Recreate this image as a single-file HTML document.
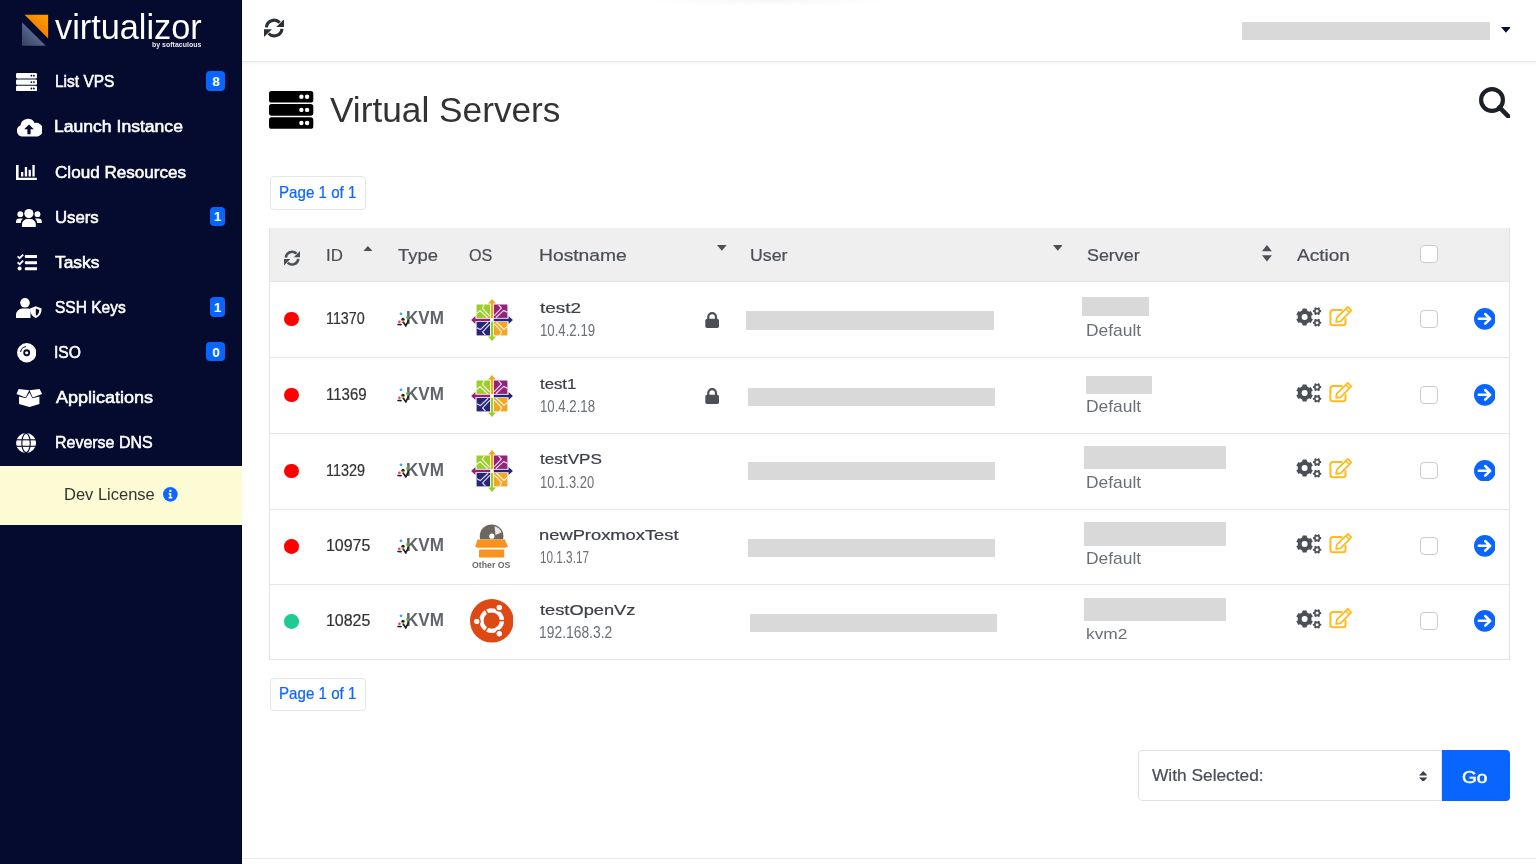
<!DOCTYPE html>
<html><head><meta charset="utf-8"><title>Virtual Servers</title>
<style>
html,body{margin:0;padding:0;}
body{width:1536px;height:864px;overflow:hidden;position:relative;background:#fff;font-family:"Liberation Sans",sans-serif;}
.a{position:absolute;display:block;}
.t{position:absolute;white-space:nowrap;transform-origin:0 0;}
</style></head><body>
<div class="a" style="left:0px;top:0px;width:242px;height:864px;background:#040b2e"></div>
<div class="a" style="left:241px;top:0px;width:1px;height:864px;background:#000628"></div>
<div class="a" style="left:242px;top:0px;width:1294px;height:61px;background:#fff"></div>
<div class="a" style="left:242px;top:61px;width:1294px;height:1px;background:#e4e6ea"></div>
<div class="a" style="left:242px;top:62px;width:1294px;height:4px;background:linear-gradient(#f6f6f7,#fff)"></div>
<div class="a" style="left:242px;top:858px;width:1294px;height:1px;background:#e9eaec"></div>
<div class="a" style="left:0px;top:466px;width:242px;height:59px;background:#fdfbd3"></div>
<div class="a" style="left:640px;top:0px;width:260px;height:6px;background:radial-gradient(ellipse at 50% 0%,rgba(0,0,0,0.035),rgba(0,0,0,0) 70%)"></div>
<svg class="a" style="left:20px;top:12px;width:30px;height:36px;" viewBox="20 12 30 36" preserveAspectRatio="none"><defs><linearGradient id="og" x1="1" y1="0" x2="0.3" y2="1"><stop offset="0" stop-color="#ffa000"/><stop offset="1" stop-color="#f07000"/></linearGradient>
<linearGradient id="bg" x1="0" y1="1" x2="0.7" y2="0.3"><stop offset="0" stop-color="#37425c"/><stop offset="1" stop-color="#5d73a0"/></linearGradient></defs>
<polygon points="24.6,14.8 48.1,14.8 48.1,38.5" fill="url(#og)"/>
<polygon points="22,22.3 22,45.7 45.8,45.7" fill="url(#bg)"/></svg>
<div class="t" style="left:54.83px;top:10px;font-size:34.6px;line-height:34.6px;color:#fff;transform:scaleX(0.9917);">virtualizor</div>
<div class="t" style="left:151.55px;top:41px;font-size:7.6px;line-height:7.6px;color:#e6e8ee;font-weight:bold;transform:scaleX(0.9201);">by softaculous</div>
<div class="t" style="left:54.56px;top:74px;font-size:16.6px;line-height:16.6px;color:#fff;-webkit-text-stroke:0.22px #fff;transform:scaleX(0.9337);-webkit-text-stroke:0.55px #fff;">List VPS</div>
<div class="t" style="left:54.39px;top:119px;font-size:16.6px;line-height:16.6px;color:#fff;-webkit-text-stroke:0.22px #fff;transform:scaleX(1.0587);-webkit-text-stroke:0.55px #fff;">Launch Instance</div>
<div class="t" style="left:54.95px;top:165px;font-size:16.6px;line-height:16.6px;color:#fff;-webkit-text-stroke:0.22px #fff;transform:scaleX(1.0301);-webkit-text-stroke:0.55px #fff;">Cloud Resources</div>
<div class="t" style="left:54.54px;top:210px;font-size:16.6px;line-height:16.6px;color:#fff;-webkit-text-stroke:0.22px #fff;transform:scaleX(1.0096);-webkit-text-stroke:0.55px #fff;">Users</div>
<div class="t" style="left:55.45px;top:255px;font-size:16.6px;line-height:16.6px;color:#fff;-webkit-text-stroke:0.22px #fff;transform:scaleX(1.0482);-webkit-text-stroke:0.55px #fff;">Tasks</div>
<div class="t" style="left:55.10px;top:300px;font-size:16.6px;line-height:16.6px;color:#fff;-webkit-text-stroke:0.22px #fff;transform:scaleX(0.9356);-webkit-text-stroke:0.55px #fff;">SSH Keys</div>
<div class="t" style="left:54.39px;top:345px;font-size:16.6px;line-height:16.6px;color:#fff;-webkit-text-stroke:0.22px #fff;transform:scaleX(0.9426);-webkit-text-stroke:0.55px #fff;">ISO</div>
<div class="t" style="left:55.71px;top:390px;font-size:16.6px;line-height:16.6px;color:#fff;-webkit-text-stroke:0.22px #fff;transform:scaleX(1.0855);-webkit-text-stroke:0.55px #fff;">Applications</div>
<div class="t" style="left:54.52px;top:435px;font-size:16.6px;line-height:16.6px;color:#fff;-webkit-text-stroke:0.22px #fff;transform:scaleX(0.9622);-webkit-text-stroke:0.55px #fff;">Reverse DNS</div>
<svg class="a" style="left:16px;top:72.8px;width:21.1px;height:18.200000000000003px;" viewBox="0 0 21 18.2" preserveAspectRatio="none"><rect x="0" y="0" width="21" height="5.4" rx="1.3" fill="#fff"/><circle cx="15.3" cy="2.7" r="0.9" fill="#040b2e"/><circle cx="17.8" cy="2.7" r="0.9" fill="#040b2e"/><rect x="0" y="6.4" width="21" height="5.4" rx="1.3" fill="#fff"/><circle cx="15.3" cy="9.100000000000001" r="0.9" fill="#040b2e"/><circle cx="17.8" cy="9.100000000000001" r="0.9" fill="#040b2e"/><rect x="0" y="12.8" width="21" height="5.4" rx="1.3" fill="#fff"/><circle cx="15.3" cy="15.5" r="0.9" fill="#040b2e"/><circle cx="17.8" cy="15.5" r="0.9" fill="#040b2e"/></svg>
<svg class="a" style="left:16px;top:118.4px;width:26px;height:18.599999999999994px;" viewBox="0 0 26 18.6" preserveAspectRatio="none"><path d="M6,18.6 A6,6 0 0 1 4.5,7.2 A7.5,7.5 0 0 1 18.6,5 A5.8,5.8 0 0 1 21.5,18.6 Z" fill="#fff"/><path d="M13,6.5 L8.2,11.3 H11.4 V16.2 H14.6 V11.3 H17.8 Z" fill="#040b2e"/></svg>
<svg class="a" style="left:16.2px;top:164.7px;width:20.8px;height:15.5px;" viewBox="0 0 20.8 15.5" preserveAspectRatio="none"><rect x="0" y="0" width="2.6" height="15.5" fill="#fff"/><rect x="0" y="12.8" width="20.8" height="2.7" rx="0.5" fill="#fff"/><rect x="5" y="7" width="2.3" height="4.5" fill="#fff"/><rect x="8.8" y="2" width="2.3" height="9.5" fill="#fff"/><rect x="12.6" y="4.8" width="2.3" height="6.7" fill="#fff"/><rect x="16.4" y="0" width="2.3" height="11.5" fill="#fff"/></svg>
<svg class="a" style="left:16.2px;top:209.2px;width:25.8px;height:18.200000000000017px;" viewBox="0 0 25.8 18.2" preserveAspectRatio="none"><circle cx="12.9" cy="4.6" r="4.6" fill="#fff"/><path d="M6,18.2 V15 A5.5,5.5 0 0 1 11.5,10 H14.3 A5.5,5.5 0 0 1 19.8,15 V18.2 Z" fill="#fff"/><circle cx="4.3" cy="5.2" r="2.9" fill="#fff"/><circle cx="21.5" cy="5.2" r="2.9" fill="#fff"/><path d="M0,14 V13 A3.5,3.5 0 0 1 3.5,9.5 H6.8 A6.5,6.5 0 0 0 4.8,14 Z" fill="#fff"/><path d="M25.8,14 V13 A3.5,3.5 0 0 0 22.3,9.5 H19 A6.5,6.5 0 0 1 21,14 Z" fill="#fff"/></svg>
<svg class="a" style="left:16.6px;top:254.3px;width:20.4px;height:16.69999999999999px;" viewBox="0 0 20.4 16.7" preserveAspectRatio="none"><path d="M0.6,2.4 L2.6,4.2 L6.2,0.6" stroke="#fff" stroke-width="1.8" fill="none"/><path d="M0.6,8.4 L2.6,10.2 L6.2,6.6" stroke="#fff" stroke-width="1.8" fill="none"/><circle cx="2.6" cy="14.6" r="2" fill="#fff"/><rect x="7.8" y="1" width="12.6" height="3" rx="1" fill="#fff"/><rect x="7.8" y="7.2" width="12.6" height="3" rx="1" fill="#fff"/><rect x="7.8" y="13.2" width="12.6" height="3" rx="1" fill="#fff"/></svg>
<svg class="a" style="left:16.4px;top:297.8px;width:25.6px;height:20.0px;" viewBox="0 0 25.6 20" preserveAspectRatio="none"><circle cx="9" cy="4.8" r="4.8" fill="#fff"/><path d="M0,20 V17 A6.5,6.5 0 0 1 6.5,10.5 H12 A6,6 0 0 1 14.5,11 V20 Z" fill="#fff"/><path d="M19.8,8.2 L25.6,10.6 C25.6,15.5 23.5,18.6 19.8,20 C16.1,18.6 14,15.5 14,10.6 Z" fill="#fff"/><path d="M19.8,10.5 L23.3,12 C23.1,15 22,16.8 19.8,17.8 Z" fill="#040b2e"/></svg>
<svg class="a" style="left:16.9px;top:343.3px;width:19.4px;height:19.5px;" viewBox="0 0 19.4 19.5" preserveAspectRatio="none"><circle cx="9.7" cy="9.75" r="9.7" fill="#fff"/><circle cx="9.7" cy="9.75" r="3.4" fill="#040b2e"/><circle cx="9.7" cy="9.75" r="1.6" fill="#fff"/><path d="M3.6,9 A6.3,6.3 0 0 1 9,3.6" stroke="#040b2e" stroke-width="1" fill="none"/></svg>
<svg class="a" style="left:12px;top:384px;width:34px;height:28px;" viewBox="0 0 34 28" preserveAspectRatio="none"><path d="M6.6,4.9 L17.3,6.3 L13.6,13.5 L4.5,10 Z M27.6,4.9 L17.5,6.3 L20.7,13.6 L30.1,10 Z M7,12.6 L13.9,14.3 L17.5,8.6 L20.4,14.3 L27.4,12.6 V20.1 L17.5,23 L7,20.1 Z" fill="#fff"/></svg>
<svg class="a" style="left:16.2px;top:432.9px;width:20.099999999999998px;height:20.100000000000023px;" viewBox="0 0 20.1 20.1" preserveAspectRatio="none"><circle cx="10.05" cy="10.05" r="10" fill="#fff"/><ellipse cx="10.05" cy="10.05" rx="4.2" ry="9.6" stroke="#040b2e" stroke-width="1.1" fill="none"/><line x1="0" y1="6.8" x2="20.1" y2="6.8" stroke="#040b2e" stroke-width="1.1"/><line x1="0" y1="13.3" x2="20.1" y2="13.3" stroke="#040b2e" stroke-width="1.1"/></svg>
<div class="a" style="left:206.4px;top:71.3px;width:19.0px;height:19.5px;background:#0866ff;border-radius:4px"></div>
<div class="t" style="left:212.18px;top:75px;font-size:13.4px;line-height:13.4px;color:#fff;font-weight:bold;">8</div>
<div class="a" style="left:210.3px;top:207px;width:15.099999999999994px;height:19px;background:#0866ff;border-radius:4px"></div>
<div class="t" style="left:213.86px;top:210px;font-size:13.4px;line-height:13.4px;color:#fff;font-weight:bold;">1</div>
<div class="a" style="left:210.3px;top:297.2px;width:15.099999999999994px;height:19.5px;background:#0866ff;border-radius:4px"></div>
<div class="t" style="left:213.86px;top:301px;font-size:13.4px;line-height:13.4px;color:#fff;font-weight:bold;">1</div>
<div class="a" style="left:206.4px;top:342.4px;width:19.0px;height:19.100000000000023px;background:#0866ff;border-radius:4px"></div>
<div class="t" style="left:212.18px;top:346px;font-size:13.4px;line-height:13.4px;color:#fff;font-weight:bold;">0</div>
<div class="t" style="left:63.78px;top:487px;font-size:15.8px;line-height:15.8px;color:#333;transform:scaleX(1.0445);">Dev License</div>
<svg class="a" style="left:163.2px;top:487.1px;width:14.700000000000017px;height:14.699999999999989px;" viewBox="0 0 14.7 14.7" preserveAspectRatio="none"><circle cx="7.35" cy="7.35" r="7.35" fill="#0d66ff"/><circle cx="7.35" cy="3.9" r="1.2" fill="#fff"/><path d="M5.6,6 H8.3 V10 H9.3 V11.4 H5.6 V10 H6.6 V7.4 H5.6 Z" fill="#fff"/></svg>
<svg class="a" style="left:264px;top:17.7px;width:20.30000000000001px;height:20.099999999999998px;" viewBox="0 0 16 16" preserveAspectRatio="none"><path d="M1.85,7.4 A6.15,6.15 0 0 1 12.35,3.65" stroke="#2b2f36" stroke-width="2.5" fill="none"/><path d="M16,0.8 V7.1 H9.7 Z" fill="#2b2f36"/><path d="M14.15,8.6 A6.15,6.15 0 0 1 3.65,12.35" stroke="#2b2f36" stroke-width="2.5" fill="none"/><path d="M0,15.2 V8.9 H6.3 Z" fill="#2b2f36"/></svg>
<div class="a" style="left:1242.3px;top:21.6px;width:247.29999999999995px;height:18.199999999999996px;background:#d9d9d9"></div>
<svg class="a" style="left:1500.6px;top:26.8px;width:9.900000000000091px;height:5.800000000000001px;" viewBox="0 0 10 6" preserveAspectRatio="none"><path d="M0,0 H10 L5,6 Z" fill="#0a0f2e"/></svg>
<svg class="a" style="left:269.4px;top:91.1px;width:44.30000000000001px;height:37.80000000000001px;" viewBox="0 0 44.3 37.8" preserveAspectRatio="none"><rect x="0" y="0" width="44.3" height="11.6" rx="2.6" fill="#000"/><circle cx="32.4" cy="5.8" r="2.2" fill="#fff"/><circle cx="38.1" cy="5.8" r="2.2" fill="#fff"/><rect x="0" y="13.1" width="44.3" height="11.6" rx="2.6" fill="#000"/><circle cx="32.4" cy="18.9" r="2.2" fill="#fff"/><circle cx="38.1" cy="18.9" r="2.2" fill="#fff"/><rect x="0" y="26.2" width="44.3" height="11.6" rx="2.6" fill="#000"/><circle cx="32.4" cy="32.0" r="2.2" fill="#fff"/><circle cx="38.1" cy="32.0" r="2.2" fill="#fff"/></svg>
<div class="t" style="left:329.62px;top:92px;font-size:35.1px;line-height:35.1px;color:#333;transform:scaleX(1.0046);">Virtual Servers</div>
<svg class="a" style="left:1478.5px;top:86.7px;width:31.700000000000045px;height:31.799999999999997px;" viewBox="0 0 31.7 31.8" preserveAspectRatio="none"><circle cx="13" cy="13" r="10.9" stroke="#1d2127" stroke-width="4.2" fill="none"/><path d="M20.5,20.5 L29.3,29.3" stroke="#1d2127" stroke-width="4.6" stroke-linecap="round"/></svg>
<div class="a" style="left:269.8px;top:176.3px;width:96.09999999999997px;height:33.599999999999994px;border:1px solid #e3e6ea;border-radius:4px;background:#fff;box-sizing:border-box"></div>
<div class="t" style="left:279.19px;top:184px;font-size:16.1px;line-height:16.1px;color:#0d66ff;-webkit-text-stroke:0.22px #0d66ff;transform:scaleX(0.9398);">Page 1 of 1</div>
<div class="a" style="left:269.8px;top:677.8px;width:96.09999999999997px;height:33.60000000000002px;border:1px solid #e3e6ea;border-radius:4px;background:#fff;box-sizing:border-box"></div>
<div class="t" style="left:279.19px;top:685px;font-size:16.1px;line-height:16.1px;color:#0d66ff;-webkit-text-stroke:0.22px #0d66ff;transform:scaleX(0.9398);">Page 1 of 1</div>
<div class="a" style="left:269px;top:228px;width:1240.5px;height:431.5px;border:1px solid #dfe2e6;border-top:0;box-sizing:border-box;background:#fff"></div>
<div class="a" style="left:270px;top:228px;width:1238.5px;height:53px;background:#efefef"></div>
<div class="a" style="left:270px;top:281px;width:1238.5px;height:1px;background:#e3e5e8"></div>
<div class="a" style="left:270px;top:357px;width:1238.5px;height:1px;background:#e5e7eb"></div>
<div class="a" style="left:270px;top:433px;width:1238.5px;height:1px;background:#e5e7eb"></div>
<div class="a" style="left:270px;top:508.5px;width:1238.5px;height:1.0px;background:#e5e7eb"></div>
<div class="a" style="left:270px;top:584px;width:1238.5px;height:1px;background:#e5e7eb"></div>
<svg class="a" style="left:284px;top:250px;width:16.19999999999999px;height:16.30000000000001px;" viewBox="0 0 16 16" preserveAspectRatio="none"><path d="M1.85,7.4 A6.15,6.15 0 0 1 12.35,3.65" stroke="#4b4f56" stroke-width="2.5" fill="none"/><path d="M16,0.8 V7.1 H9.7 Z" fill="#4b4f56"/><path d="M14.15,8.6 A6.15,6.15 0 0 1 3.65,12.35" stroke="#4b4f56" stroke-width="2.5" fill="none"/><path d="M0,15.2 V8.9 H6.3 Z" fill="#4b4f56"/></svg>
<div class="t" style="left:325.78px;top:248px;font-size:16.7px;line-height:16.7px;color:#4b4f56;-webkit-text-stroke:0.22px #4b4f56;transform:scaleX(1.0107);">ID</div>
<div class="t" style="left:397.63px;top:248px;font-size:16.7px;line-height:16.7px;color:#4b4f56;-webkit-text-stroke:0.22px #4b4f56;transform:scaleX(1.1035);">Type</div>
<div class="t" style="left:469.27px;top:248px;font-size:16.7px;line-height:16.7px;color:#4b4f56;-webkit-text-stroke:0.22px #4b4f56;transform:scaleX(0.9678);">OS</div>
<div class="t" style="left:538.86px;top:248px;font-size:16.7px;line-height:16.7px;color:#4b4f56;-webkit-text-stroke:0.22px #4b4f56;transform:scaleX(1.1544);">Hostname</div>
<div class="t" style="left:749.97px;top:248px;font-size:16.7px;line-height:16.7px;color:#4b4f56;-webkit-text-stroke:0.22px #4b4f56;transform:scaleX(1.0642);">User</div>
<div class="t" style="left:1086.70px;top:248px;font-size:16.7px;line-height:16.7px;color:#4b4f56;-webkit-text-stroke:0.22px #4b4f56;transform:scaleX(1.0708);">Server</div>
<div class="t" style="left:1297.00px;top:248px;font-size:16.7px;line-height:16.7px;color:#4b4f56;-webkit-text-stroke:0.22px #4b4f56;transform:scaleX(1.1402);">Action</div>
<svg class="a" style="left:362.7px;top:245.8px;width:9.800000000000011px;height:5.5px;" viewBox="0 0 10 6" preserveAspectRatio="none"><path d="M0,6 H10 L5,0 Z" fill="#4b4f56"/></svg>
<svg class="a" style="left:716.9px;top:245.4px;width:9.700000000000045px;height:5.699999999999989px;" viewBox="0 0 10 6" preserveAspectRatio="none"><path d="M0,0 H10 L5,6 Z" fill="#4b4f56"/></svg>
<svg class="a" style="left:1052.9px;top:245.4px;width:9.599999999999909px;height:5.699999999999989px;" viewBox="0 0 10 6" preserveAspectRatio="none"><path d="M0,0 H10 L5,6 Z" fill="#4b4f56"/></svg>
<svg class="a" style="left:1262px;top:245.4px;width:9.900000000000091px;height:16.599999999999994px;" viewBox="0 0 10 16.6" preserveAspectRatio="none"><path d="M0,6.3 H10 L5,0 Z M0,10.3 H10 L5,16.6 Z" fill="#4b4f56"/></svg>
<div class="a" style="left:1420.3px;top:245.3px;width:17.40000000000009px;height:17.5px;border:1px solid #c6cbd1;border-radius:4px;background:#fff;box-sizing:border-box"></div>
<div class="a" style="left:284px;top:311.9px;width:14.6px;height:14.6px;border-radius:50%;background:#ff0000"></div>
<div class="t" style="left:326.33px;top:310px;font-size:17.0px;line-height:17.0px;color:#333;-webkit-text-stroke:0.22px #333;transform:scaleX(0.8426);">11370</div>
<div class="t" style="left:405.79px;top:310px;font-size:17.5px;line-height:17.5px;color:#4f535c;font-weight:bold;transform:scaleX(0.9733);filter:blur(0.3px);opacity:0.9;">KVM</div>
<svg class="a" style="left:396.5px;top:311.7px;width:12.5px;height:15.0px;" viewBox="0 0 12.5 15" preserveAspectRatio="none"><circle cx="4" cy="1.8" r="1.4" fill="#3aa6e8"/><circle cx="10.5" cy="5.4" r="1.4" fill="#5cb531"/><circle cx="2.4" cy="9.8" r="1.3" fill="#e0399a"/>
<circle cx="6" cy="7.5" r="1.7" fill="#222"/><circle cx="6" cy="9.7" r="1.4" fill="#e5b93a"/><path d="M1,12.5 L4,12.6 M6.5,10.5 L8.8,13.8 L11.5,8.5" stroke="#222" stroke-width="1.7" fill="none" stroke-linecap="round"/></svg>
<svg class="a" style="left:470.5px;top:298.59999999999997px;width:42.0px;height:42.0px;" viewBox="0 0 42 42" preserveAspectRatio="none"><g>
<rect x="5.6" y="5.5" width="13.4" height="13.4" fill="#9ccd2a"/>
<rect x="23.0" y="5.5" width="13.4" height="13.4" fill="#932279"/>
<rect x="5.6" y="23.0" width="13.4" height="13.4" fill="#262577"/>
<rect x="23.0" y="23.0" width="13.4" height="13.4" fill="#efa724"/>
<path d="M13.2,5.8 L11.4,9.3 L18.7,17.2 M5.8,14.4 L9.1,11.6 L16.6,18.7" stroke="#fff" stroke-width="1.2" fill="none" opacity="0.85"/>
<g transform="rotate(90 21 21)"><path d="M13.2,5.8 L11.4,9.3 L18.7,17.2 M5.8,14.4 L9.1,11.6 L16.6,18.7" stroke="#fff" stroke-width="1.2" fill="none" opacity="0.85"/></g>
<g transform="rotate(180 21 21)"><path d="M13.2,5.8 L11.4,9.3 L18.7,17.2 M5.8,14.4 L9.1,11.6 L16.6,18.7" stroke="#fff" stroke-width="1.2" fill="none" opacity="0.85"/></g>
<g transform="rotate(270 21 21)"><path d="M13.2,5.8 L11.4,9.3 L18.7,17.2 M5.8,14.4 L9.1,11.6 L16.6,18.7" stroke="#fff" stroke-width="1.2" fill="none" opacity="0.85"/></g>
<path d="M21,0.1 L25,4.4 H22.2 V19.2 H19.8 V4.4 H17 Z" fill="#efa724"/>
<path d="M41.9,21 L37.6,25 V22.2 H22.8 V19.8 H37.6 V17 Z" fill="#262577"/>
<path d="M21,41.9 L17,37.6 H19.8 V22.8 H22.2 V37.6 H25 Z" fill="#9ccd2a"/>
<path d="M0.1,21 L4.4,17 V19.8 H19.2 V22.2 H4.4 V25 Z" fill="#932279"/>
</g></svg>
<div class="t" style="left:540.32px;top:300px;font-size:15.4px;line-height:15.4px;color:#3d4047;-webkit-text-stroke:0.22px #3d4047;transform:scaleX(1.2276);">test2</div>
<div class="t" style="left:539.51px;top:323px;font-size:15.6px;line-height:15.6px;color:#6b6f76;transform:scaleX(0.8468);">10.4.2.19</div>
<svg class="a" style="left:705px;top:311.9px;width:14.299999999999955px;height:16.0px;" viewBox="0 0 14.3 16" preserveAspectRatio="none"><path d="M3.3,7.2 V5 A3.85,3.85 0 0 1 11,5 V7.2" stroke="#4b4f56" stroke-width="2.2" fill="none"/><rect x="0.3" y="6.8" width="13.7" height="9.2" rx="1.8" fill="#4b4f56"/></svg>
<div class="a" style="left:745.8px;top:310.8px;width:247.95000000000005px;height:18.80000000000001px;background:#d9d9d9"></div>
<div class="a" style="left:1082.1px;top:297.4px;width:67.0px;height:18.400000000000034px;background:#d9d9d9"></div>
<div class="t" style="left:1086.21px;top:322px;font-size:16.2px;line-height:16.2px;color:#6b6f76;transform:scaleX(1.0762);">Default</div>
<svg class="a" style="left:1296.2px;top:306.59999999999997px;width:25.799999999999955px;height:20.0px;" viewBox="0 0 25.8 20" preserveAspectRatio="none"><rect x="6.3999999999999995" y="1.5999999999999996" width="4.4" height="8.4" rx="0.6" transform="rotate(0.0 8.6 10)" fill="#4b4f57"/><rect x="6.3999999999999995" y="1.5999999999999996" width="4.4" height="8.4" rx="0.6" transform="rotate(60.0 8.6 10)" fill="#4b4f57"/><rect x="6.3999999999999995" y="1.5999999999999996" width="4.4" height="8.4" rx="0.6" transform="rotate(120.0 8.6 10)" fill="#4b4f57"/><rect x="6.3999999999999995" y="1.5999999999999996" width="4.4" height="8.4" rx="0.6" transform="rotate(180.0 8.6 10)" fill="#4b4f57"/><rect x="6.3999999999999995" y="1.5999999999999996" width="4.4" height="8.4" rx="0.6" transform="rotate(240.0 8.6 10)" fill="#4b4f57"/><rect x="6.3999999999999995" y="1.5999999999999996" width="4.4" height="8.4" rx="0.6" transform="rotate(300.0 8.6 10)" fill="#4b4f57"/><circle cx="8.6" cy="10" r="6.9" fill="#4b4f57"/><circle cx="8.6" cy="10" r="3.0" fill="#fff"/><rect x="20.05" y="0.0" width="2.1" height="4.1" rx="0.6" transform="rotate(30.0 21.1 4.1)" fill="#4b4f57"/><rect x="20.05" y="0.0" width="2.1" height="4.1" rx="0.6" transform="rotate(90.0 21.1 4.1)" fill="#4b4f57"/><rect x="20.05" y="0.0" width="2.1" height="4.1" rx="0.6" transform="rotate(150.0 21.1 4.1)" fill="#4b4f57"/><rect x="20.05" y="0.0" width="2.1" height="4.1" rx="0.6" transform="rotate(210.0 21.1 4.1)" fill="#4b4f57"/><rect x="20.05" y="0.0" width="2.1" height="4.1" rx="0.6" transform="rotate(270.0 21.1 4.1)" fill="#4b4f57"/><rect x="20.05" y="0.0" width="2.1" height="4.1" rx="0.6" transform="rotate(330.0 21.1 4.1)" fill="#4b4f57"/><circle cx="21.1" cy="4.1" r="3.1" fill="#4b4f57"/><circle cx="21.1" cy="4.1" r="1.5" fill="#fff"/><rect x="20.05" y="11.6" width="2.1" height="4.1" rx="0.6" transform="rotate(30.0 21.1 15.7)" fill="#4b4f57"/><rect x="20.05" y="11.6" width="2.1" height="4.1" rx="0.6" transform="rotate(90.0 21.1 15.7)" fill="#4b4f57"/><rect x="20.05" y="11.6" width="2.1" height="4.1" rx="0.6" transform="rotate(150.0 21.1 15.7)" fill="#4b4f57"/><rect x="20.05" y="11.6" width="2.1" height="4.1" rx="0.6" transform="rotate(210.0 21.1 15.7)" fill="#4b4f57"/><rect x="20.05" y="11.6" width="2.1" height="4.1" rx="0.6" transform="rotate(270.0 21.1 15.7)" fill="#4b4f57"/><rect x="20.05" y="11.6" width="2.1" height="4.1" rx="0.6" transform="rotate(330.0 21.1 15.7)" fill="#4b4f57"/><circle cx="21.1" cy="15.7" r="3.1" fill="#4b4f57"/><circle cx="21.1" cy="15.7" r="1.5" fill="#fff"/></svg>
<svg class="a" style="left:1328.8px;top:306.0px;width:23.5px;height:21.0px;" viewBox="0 0 23.5 21" preserveAspectRatio="none"><path d="M12.7,3.9 H3.9 A2.5,2.5 0 0 0 1.4,6.4 V16.8 A2.5,2.5 0 0 0 3.9,19.3 H14 A2.5,2.5 0 0 0 16.5,16.8 V13.1" stroke="#ffbb1c" stroke-width="2" fill="none" stroke-linecap="round"/><path d="M7.2,15.9 L7.83,11.59 L18.82,0.9 L22.3,4.38 L11.5,15.27 Z" stroke="#ffbb1c" stroke-width="1.8" fill="none" stroke-linejoin="round"/><line x1="16.66" y1="2.76" x2="20.14" y2="6.24" stroke="#ffbb1c" stroke-width="1.5"/></svg>
<div class="a" style="left:1420.3px;top:310.09999999999997px;width:17.40000000000009px;height:17.5px;border:1px solid #c6cbd1;border-radius:4px;background:#fff;box-sizing:border-box"></div>
<svg class="a" style="left:1473.5500000000002px;top:307.95px;width:21.699999999999818px;height:21.700000000000045px;" viewBox="0 0 21.7 21.7" preserveAspectRatio="none"><circle cx="10.85" cy="10.85" r="10.85" fill="#0b65fd"/><path d="M4.8,10.85 H15.5 M11.2,6 L16.2,10.85 L11.2,15.7" stroke="#fff" stroke-width="2.5" fill="none" stroke-linecap="round" stroke-linejoin="round"/></svg>
<div class="a" style="left:284px;top:387.9px;width:14.6px;height:14.6px;border-radius:50%;background:#ff0000"></div>
<div class="t" style="left:326.27px;top:386px;font-size:17.0px;line-height:17.0px;color:#333;-webkit-text-stroke:0.22px #333;transform:scaleX(0.8829);">11369</div>
<div class="t" style="left:405.79px;top:386px;font-size:17.5px;line-height:17.5px;color:#4f535c;font-weight:bold;transform:scaleX(0.9733);filter:blur(0.3px);opacity:0.9;">KVM</div>
<svg class="a" style="left:396.5px;top:387.7px;width:12.5px;height:15.0px;" viewBox="0 0 12.5 15" preserveAspectRatio="none"><circle cx="4" cy="1.8" r="1.4" fill="#3aa6e8"/><circle cx="10.5" cy="5.4" r="1.4" fill="#5cb531"/><circle cx="2.4" cy="9.8" r="1.3" fill="#e0399a"/>
<circle cx="6" cy="7.5" r="1.7" fill="#222"/><circle cx="6" cy="9.7" r="1.4" fill="#e5b93a"/><path d="M1,12.5 L4,12.6 M6.5,10.5 L8.8,13.8 L11.5,8.5" stroke="#222" stroke-width="1.7" fill="none" stroke-linecap="round"/></svg>
<svg class="a" style="left:470.5px;top:374.59999999999997px;width:42.0px;height:42.0px;" viewBox="0 0 42 42" preserveAspectRatio="none"><g>
<rect x="5.6" y="5.5" width="13.4" height="13.4" fill="#9ccd2a"/>
<rect x="23.0" y="5.5" width="13.4" height="13.4" fill="#932279"/>
<rect x="5.6" y="23.0" width="13.4" height="13.4" fill="#262577"/>
<rect x="23.0" y="23.0" width="13.4" height="13.4" fill="#efa724"/>
<path d="M13.2,5.8 L11.4,9.3 L18.7,17.2 M5.8,14.4 L9.1,11.6 L16.6,18.7" stroke="#fff" stroke-width="1.2" fill="none" opacity="0.85"/>
<g transform="rotate(90 21 21)"><path d="M13.2,5.8 L11.4,9.3 L18.7,17.2 M5.8,14.4 L9.1,11.6 L16.6,18.7" stroke="#fff" stroke-width="1.2" fill="none" opacity="0.85"/></g>
<g transform="rotate(180 21 21)"><path d="M13.2,5.8 L11.4,9.3 L18.7,17.2 M5.8,14.4 L9.1,11.6 L16.6,18.7" stroke="#fff" stroke-width="1.2" fill="none" opacity="0.85"/></g>
<g transform="rotate(270 21 21)"><path d="M13.2,5.8 L11.4,9.3 L18.7,17.2 M5.8,14.4 L9.1,11.6 L16.6,18.7" stroke="#fff" stroke-width="1.2" fill="none" opacity="0.85"/></g>
<path d="M21,0.1 L25,4.4 H22.2 V19.2 H19.8 V4.4 H17 Z" fill="#efa724"/>
<path d="M41.9,21 L37.6,25 V22.2 H22.8 V19.8 H37.6 V17 Z" fill="#262577"/>
<path d="M21,41.9 L17,37.6 H19.8 V22.8 H22.2 V37.6 H25 Z" fill="#9ccd2a"/>
<path d="M0.1,21 L4.4,17 V19.8 H19.2 V22.2 H4.4 V25 Z" fill="#932279"/>
</g></svg>
<div class="t" style="left:540.35px;top:376px;font-size:15.4px;line-height:15.4px;color:#3d4047;-webkit-text-stroke:0.22px #3d4047;transform:scaleX(1.0889);">test1</div>
<div class="t" style="left:539.51px;top:399px;font-size:15.6px;line-height:15.6px;color:#6b6f76;transform:scaleX(0.8457);">10.4.2.18</div>
<svg class="a" style="left:705px;top:387.9px;width:14.299999999999955px;height:16.0px;" viewBox="0 0 14.3 16" preserveAspectRatio="none"><path d="M3.3,7.2 V5 A3.85,3.85 0 0 1 11,5 V7.2" stroke="#4b4f56" stroke-width="2.2" fill="none"/><rect x="0.3" y="6.8" width="13.7" height="9.2" rx="1.8" fill="#4b4f56"/></svg>
<div class="a" style="left:748px;top:388px;width:247px;height:18px;background:#d9d9d9"></div>
<div class="a" style="left:1085.8px;top:376px;width:66.20000000000005px;height:18px;background:#d9d9d9"></div>
<div class="t" style="left:1086.21px;top:398px;font-size:16.2px;line-height:16.2px;color:#6b6f76;transform:scaleX(1.0762);">Default</div>
<svg class="a" style="left:1296.2px;top:382.59999999999997px;width:25.799999999999955px;height:20.0px;" viewBox="0 0 25.8 20" preserveAspectRatio="none"><rect x="6.3999999999999995" y="1.5999999999999996" width="4.4" height="8.4" rx="0.6" transform="rotate(0.0 8.6 10)" fill="#4b4f57"/><rect x="6.3999999999999995" y="1.5999999999999996" width="4.4" height="8.4" rx="0.6" transform="rotate(60.0 8.6 10)" fill="#4b4f57"/><rect x="6.3999999999999995" y="1.5999999999999996" width="4.4" height="8.4" rx="0.6" transform="rotate(120.0 8.6 10)" fill="#4b4f57"/><rect x="6.3999999999999995" y="1.5999999999999996" width="4.4" height="8.4" rx="0.6" transform="rotate(180.0 8.6 10)" fill="#4b4f57"/><rect x="6.3999999999999995" y="1.5999999999999996" width="4.4" height="8.4" rx="0.6" transform="rotate(240.0 8.6 10)" fill="#4b4f57"/><rect x="6.3999999999999995" y="1.5999999999999996" width="4.4" height="8.4" rx="0.6" transform="rotate(300.0 8.6 10)" fill="#4b4f57"/><circle cx="8.6" cy="10" r="6.9" fill="#4b4f57"/><circle cx="8.6" cy="10" r="3.0" fill="#fff"/><rect x="20.05" y="0.0" width="2.1" height="4.1" rx="0.6" transform="rotate(30.0 21.1 4.1)" fill="#4b4f57"/><rect x="20.05" y="0.0" width="2.1" height="4.1" rx="0.6" transform="rotate(90.0 21.1 4.1)" fill="#4b4f57"/><rect x="20.05" y="0.0" width="2.1" height="4.1" rx="0.6" transform="rotate(150.0 21.1 4.1)" fill="#4b4f57"/><rect x="20.05" y="0.0" width="2.1" height="4.1" rx="0.6" transform="rotate(210.0 21.1 4.1)" fill="#4b4f57"/><rect x="20.05" y="0.0" width="2.1" height="4.1" rx="0.6" transform="rotate(270.0 21.1 4.1)" fill="#4b4f57"/><rect x="20.05" y="0.0" width="2.1" height="4.1" rx="0.6" transform="rotate(330.0 21.1 4.1)" fill="#4b4f57"/><circle cx="21.1" cy="4.1" r="3.1" fill="#4b4f57"/><circle cx="21.1" cy="4.1" r="1.5" fill="#fff"/><rect x="20.05" y="11.6" width="2.1" height="4.1" rx="0.6" transform="rotate(30.0 21.1 15.7)" fill="#4b4f57"/><rect x="20.05" y="11.6" width="2.1" height="4.1" rx="0.6" transform="rotate(90.0 21.1 15.7)" fill="#4b4f57"/><rect x="20.05" y="11.6" width="2.1" height="4.1" rx="0.6" transform="rotate(150.0 21.1 15.7)" fill="#4b4f57"/><rect x="20.05" y="11.6" width="2.1" height="4.1" rx="0.6" transform="rotate(210.0 21.1 15.7)" fill="#4b4f57"/><rect x="20.05" y="11.6" width="2.1" height="4.1" rx="0.6" transform="rotate(270.0 21.1 15.7)" fill="#4b4f57"/><rect x="20.05" y="11.6" width="2.1" height="4.1" rx="0.6" transform="rotate(330.0 21.1 15.7)" fill="#4b4f57"/><circle cx="21.1" cy="15.7" r="3.1" fill="#4b4f57"/><circle cx="21.1" cy="15.7" r="1.5" fill="#fff"/></svg>
<svg class="a" style="left:1328.8px;top:382.0px;width:23.5px;height:21.0px;" viewBox="0 0 23.5 21" preserveAspectRatio="none"><path d="M12.7,3.9 H3.9 A2.5,2.5 0 0 0 1.4,6.4 V16.8 A2.5,2.5 0 0 0 3.9,19.3 H14 A2.5,2.5 0 0 0 16.5,16.8 V13.1" stroke="#ffbb1c" stroke-width="2" fill="none" stroke-linecap="round"/><path d="M7.2,15.9 L7.83,11.59 L18.82,0.9 L22.3,4.38 L11.5,15.27 Z" stroke="#ffbb1c" stroke-width="1.8" fill="none" stroke-linejoin="round"/><line x1="16.66" y1="2.76" x2="20.14" y2="6.24" stroke="#ffbb1c" stroke-width="1.5"/></svg>
<div class="a" style="left:1420.3px;top:386.09999999999997px;width:17.40000000000009px;height:17.5px;border:1px solid #c6cbd1;border-radius:4px;background:#fff;box-sizing:border-box"></div>
<svg class="a" style="left:1473.5500000000002px;top:383.95px;width:21.699999999999818px;height:21.700000000000045px;" viewBox="0 0 21.7 21.7" preserveAspectRatio="none"><circle cx="10.85" cy="10.85" r="10.85" fill="#0b65fd"/><path d="M4.8,10.85 H15.5 M11.2,6 L16.2,10.85 L11.2,15.7" stroke="#fff" stroke-width="2.5" fill="none" stroke-linecap="round" stroke-linejoin="round"/></svg>
<div class="a" style="left:284px;top:463.59999999999997px;width:14.6px;height:14.6px;border-radius:50%;background:#ff0000"></div>
<div class="t" style="left:326.32px;top:462px;font-size:17.0px;line-height:17.0px;color:#333;-webkit-text-stroke:0.22px #333;transform:scaleX(0.8488);">11329</div>
<div class="t" style="left:405.79px;top:462px;font-size:17.5px;line-height:17.5px;color:#4f535c;font-weight:bold;transform:scaleX(0.9733);filter:blur(0.3px);opacity:0.9;">KVM</div>
<svg class="a" style="left:396.5px;top:463.4px;width:12.5px;height:15.0px;" viewBox="0 0 12.5 15" preserveAspectRatio="none"><circle cx="4" cy="1.8" r="1.4" fill="#3aa6e8"/><circle cx="10.5" cy="5.4" r="1.4" fill="#5cb531"/><circle cx="2.4" cy="9.8" r="1.3" fill="#e0399a"/>
<circle cx="6" cy="7.5" r="1.7" fill="#222"/><circle cx="6" cy="9.7" r="1.4" fill="#e5b93a"/><path d="M1,12.5 L4,12.6 M6.5,10.5 L8.8,13.8 L11.5,8.5" stroke="#222" stroke-width="1.7" fill="none" stroke-linecap="round"/></svg>
<svg class="a" style="left:470.5px;top:450.29999999999995px;width:42.0px;height:42.0px;" viewBox="0 0 42 42" preserveAspectRatio="none"><g>
<rect x="5.6" y="5.5" width="13.4" height="13.4" fill="#9ccd2a"/>
<rect x="23.0" y="5.5" width="13.4" height="13.4" fill="#932279"/>
<rect x="5.6" y="23.0" width="13.4" height="13.4" fill="#262577"/>
<rect x="23.0" y="23.0" width="13.4" height="13.4" fill="#efa724"/>
<path d="M13.2,5.8 L11.4,9.3 L18.7,17.2 M5.8,14.4 L9.1,11.6 L16.6,18.7" stroke="#fff" stroke-width="1.2" fill="none" opacity="0.85"/>
<g transform="rotate(90 21 21)"><path d="M13.2,5.8 L11.4,9.3 L18.7,17.2 M5.8,14.4 L9.1,11.6 L16.6,18.7" stroke="#fff" stroke-width="1.2" fill="none" opacity="0.85"/></g>
<g transform="rotate(180 21 21)"><path d="M13.2,5.8 L11.4,9.3 L18.7,17.2 M5.8,14.4 L9.1,11.6 L16.6,18.7" stroke="#fff" stroke-width="1.2" fill="none" opacity="0.85"/></g>
<g transform="rotate(270 21 21)"><path d="M13.2,5.8 L11.4,9.3 L18.7,17.2 M5.8,14.4 L9.1,11.6 L16.6,18.7" stroke="#fff" stroke-width="1.2" fill="none" opacity="0.85"/></g>
<path d="M21,0.1 L25,4.4 H22.2 V19.2 H19.8 V4.4 H17 Z" fill="#efa724"/>
<path d="M41.9,21 L37.6,25 V22.2 H22.8 V19.8 H37.6 V17 Z" fill="#262577"/>
<path d="M21,41.9 L17,37.6 H19.8 V22.8 H22.2 V37.6 H25 Z" fill="#9ccd2a"/>
<path d="M0.1,21 L4.4,17 V19.8 H19.2 V22.2 H4.4 V25 Z" fill="#932279"/>
</g></svg>
<div class="t" style="left:540.34px;top:451px;font-size:15.4px;line-height:15.4px;color:#3d4047;-webkit-text-stroke:0.22px #3d4047;transform:scaleX(1.1140);">testVPS</div>
<div class="t" style="left:539.53px;top:475px;font-size:15.6px;line-height:15.6px;color:#6b6f76;transform:scaleX(0.8331);">10.1.3.20</div>
<div class="a" style="left:748px;top:461.6px;width:247px;height:18.399999999999977px;background:#d9d9d9"></div>
<div class="a" style="left:1084px;top:446.2px;width:141.70000000000005px;height:23.100000000000023px;background:#d9d9d9"></div>
<div class="t" style="left:1086.21px;top:474px;font-size:16.2px;line-height:16.2px;color:#6b6f76;transform:scaleX(1.0762);">Default</div>
<svg class="a" style="left:1296.2px;top:458.29999999999995px;width:25.799999999999955px;height:20.0px;" viewBox="0 0 25.8 20" preserveAspectRatio="none"><rect x="6.3999999999999995" y="1.5999999999999996" width="4.4" height="8.4" rx="0.6" transform="rotate(0.0 8.6 10)" fill="#4b4f57"/><rect x="6.3999999999999995" y="1.5999999999999996" width="4.4" height="8.4" rx="0.6" transform="rotate(60.0 8.6 10)" fill="#4b4f57"/><rect x="6.3999999999999995" y="1.5999999999999996" width="4.4" height="8.4" rx="0.6" transform="rotate(120.0 8.6 10)" fill="#4b4f57"/><rect x="6.3999999999999995" y="1.5999999999999996" width="4.4" height="8.4" rx="0.6" transform="rotate(180.0 8.6 10)" fill="#4b4f57"/><rect x="6.3999999999999995" y="1.5999999999999996" width="4.4" height="8.4" rx="0.6" transform="rotate(240.0 8.6 10)" fill="#4b4f57"/><rect x="6.3999999999999995" y="1.5999999999999996" width="4.4" height="8.4" rx="0.6" transform="rotate(300.0 8.6 10)" fill="#4b4f57"/><circle cx="8.6" cy="10" r="6.9" fill="#4b4f57"/><circle cx="8.6" cy="10" r="3.0" fill="#fff"/><rect x="20.05" y="0.0" width="2.1" height="4.1" rx="0.6" transform="rotate(30.0 21.1 4.1)" fill="#4b4f57"/><rect x="20.05" y="0.0" width="2.1" height="4.1" rx="0.6" transform="rotate(90.0 21.1 4.1)" fill="#4b4f57"/><rect x="20.05" y="0.0" width="2.1" height="4.1" rx="0.6" transform="rotate(150.0 21.1 4.1)" fill="#4b4f57"/><rect x="20.05" y="0.0" width="2.1" height="4.1" rx="0.6" transform="rotate(210.0 21.1 4.1)" fill="#4b4f57"/><rect x="20.05" y="0.0" width="2.1" height="4.1" rx="0.6" transform="rotate(270.0 21.1 4.1)" fill="#4b4f57"/><rect x="20.05" y="0.0" width="2.1" height="4.1" rx="0.6" transform="rotate(330.0 21.1 4.1)" fill="#4b4f57"/><circle cx="21.1" cy="4.1" r="3.1" fill="#4b4f57"/><circle cx="21.1" cy="4.1" r="1.5" fill="#fff"/><rect x="20.05" y="11.6" width="2.1" height="4.1" rx="0.6" transform="rotate(30.0 21.1 15.7)" fill="#4b4f57"/><rect x="20.05" y="11.6" width="2.1" height="4.1" rx="0.6" transform="rotate(90.0 21.1 15.7)" fill="#4b4f57"/><rect x="20.05" y="11.6" width="2.1" height="4.1" rx="0.6" transform="rotate(150.0 21.1 15.7)" fill="#4b4f57"/><rect x="20.05" y="11.6" width="2.1" height="4.1" rx="0.6" transform="rotate(210.0 21.1 15.7)" fill="#4b4f57"/><rect x="20.05" y="11.6" width="2.1" height="4.1" rx="0.6" transform="rotate(270.0 21.1 15.7)" fill="#4b4f57"/><rect x="20.05" y="11.6" width="2.1" height="4.1" rx="0.6" transform="rotate(330.0 21.1 15.7)" fill="#4b4f57"/><circle cx="21.1" cy="15.7" r="3.1" fill="#4b4f57"/><circle cx="21.1" cy="15.7" r="1.5" fill="#fff"/></svg>
<svg class="a" style="left:1328.8px;top:457.7px;width:23.5px;height:21.0px;" viewBox="0 0 23.5 21" preserveAspectRatio="none"><path d="M12.7,3.9 H3.9 A2.5,2.5 0 0 0 1.4,6.4 V16.8 A2.5,2.5 0 0 0 3.9,19.3 H14 A2.5,2.5 0 0 0 16.5,16.8 V13.1" stroke="#ffbb1c" stroke-width="2" fill="none" stroke-linecap="round"/><path d="M7.2,15.9 L7.83,11.59 L18.82,0.9 L22.3,4.38 L11.5,15.27 Z" stroke="#ffbb1c" stroke-width="1.8" fill="none" stroke-linejoin="round"/><line x1="16.66" y1="2.76" x2="20.14" y2="6.24" stroke="#ffbb1c" stroke-width="1.5"/></svg>
<div class="a" style="left:1420.3px;top:461.79999999999995px;width:17.40000000000009px;height:17.5px;border:1px solid #c6cbd1;border-radius:4px;background:#fff;box-sizing:border-box"></div>
<svg class="a" style="left:1473.5500000000002px;top:459.65px;width:21.699999999999818px;height:21.700000000000045px;" viewBox="0 0 21.7 21.7" preserveAspectRatio="none"><circle cx="10.85" cy="10.85" r="10.85" fill="#0b65fd"/><path d="M4.8,10.85 H15.5 M11.2,6 L16.2,10.85 L11.2,15.7" stroke="#fff" stroke-width="2.5" fill="none" stroke-linecap="round" stroke-linejoin="round"/></svg>
<div class="a" style="left:284px;top:539.0px;width:14.6px;height:14.6px;border-radius:50%;background:#ff0000"></div>
<div class="t" style="left:326.20px;top:537px;font-size:17.0px;line-height:17.0px;color:#333;-webkit-text-stroke:0.22px #333;transform:scaleX(0.9381);">10975</div>
<div class="t" style="left:405.79px;top:537px;font-size:17.5px;line-height:17.5px;color:#4f535c;font-weight:bold;transform:scaleX(0.9733);filter:blur(0.3px);opacity:0.9;">KVM</div>
<svg class="a" style="left:396.5px;top:538.8px;width:12.5px;height:15.0px;" viewBox="0 0 12.5 15" preserveAspectRatio="none"><circle cx="4" cy="1.8" r="1.4" fill="#3aa6e8"/><circle cx="10.5" cy="5.4" r="1.4" fill="#5cb531"/><circle cx="2.4" cy="9.8" r="1.3" fill="#e0399a"/>
<circle cx="6" cy="7.5" r="1.7" fill="#222"/><circle cx="6" cy="9.7" r="1.4" fill="#e5b93a"/><path d="M1,12.5 L4,12.6 M6.5,10.5 L8.8,13.8 L11.5,8.5" stroke="#222" stroke-width="1.7" fill="none" stroke-linecap="round"/></svg>
<svg class="a" style="left:474px;top:524.3px;width:36px;height:36.0px;" viewBox="0 0 36 36" preserveAspectRatio="none"><circle cx="17.6" cy="12.2" r="11.8" fill="#6d6560"/>
<rect x="0" y="15.4" width="36" height="21" fill="#fff"/>
<circle cx="17.8" cy="12.2" r="2.6" fill="#fff"/>
<path d="M20.5,2.2 A10,10 0 0 1 27.5,8.6 L21.5,11 Z" fill="#fff" opacity="0.85"/>
<path d="M3.5,15.4 H30.9 L34,22.7 L30.9,23.7 H3.5 L1.2,22.7 Z" fill="#f7931e"/>
<rect x="5" y="25.5" width="25.2" height="8" rx="0.8" fill="#f7931e"/></svg>
<div class="t" style="left:472.35px;top:560px;font-size:9.4px;line-height:9.4px;color:#6b6b6b;font-weight:bold;transform:scaleX(0.9344);">Other OS</div>
<div class="t" style="left:539.41px;top:527px;font-size:15.4px;line-height:15.4px;color:#3d4047;-webkit-text-stroke:0.22px #3d4047;transform:scaleX(1.1911);">newProxmoxTest</div>
<div class="t" style="left:539.62px;top:550px;font-size:15.6px;line-height:15.6px;color:#6b6f76;transform:scaleX(0.7527);">10.1.3.17</div>
<div class="a" style="left:748px;top:538.5px;width:247px;height:18.0px;background:#d9d9d9"></div>
<div class="a" style="left:1084px;top:522.2px;width:141.79999999999995px;height:23.399999999999977px;background:#d9d9d9"></div>
<div class="t" style="left:1086.21px;top:550px;font-size:16.2px;line-height:16.2px;color:#6b6f76;transform:scaleX(1.0762);">Default</div>
<svg class="a" style="left:1296.2px;top:533.6999999999999px;width:25.799999999999955px;height:20.0px;" viewBox="0 0 25.8 20" preserveAspectRatio="none"><rect x="6.3999999999999995" y="1.5999999999999996" width="4.4" height="8.4" rx="0.6" transform="rotate(0.0 8.6 10)" fill="#4b4f57"/><rect x="6.3999999999999995" y="1.5999999999999996" width="4.4" height="8.4" rx="0.6" transform="rotate(60.0 8.6 10)" fill="#4b4f57"/><rect x="6.3999999999999995" y="1.5999999999999996" width="4.4" height="8.4" rx="0.6" transform="rotate(120.0 8.6 10)" fill="#4b4f57"/><rect x="6.3999999999999995" y="1.5999999999999996" width="4.4" height="8.4" rx="0.6" transform="rotate(180.0 8.6 10)" fill="#4b4f57"/><rect x="6.3999999999999995" y="1.5999999999999996" width="4.4" height="8.4" rx="0.6" transform="rotate(240.0 8.6 10)" fill="#4b4f57"/><rect x="6.3999999999999995" y="1.5999999999999996" width="4.4" height="8.4" rx="0.6" transform="rotate(300.0 8.6 10)" fill="#4b4f57"/><circle cx="8.6" cy="10" r="6.9" fill="#4b4f57"/><circle cx="8.6" cy="10" r="3.0" fill="#fff"/><rect x="20.05" y="0.0" width="2.1" height="4.1" rx="0.6" transform="rotate(30.0 21.1 4.1)" fill="#4b4f57"/><rect x="20.05" y="0.0" width="2.1" height="4.1" rx="0.6" transform="rotate(90.0 21.1 4.1)" fill="#4b4f57"/><rect x="20.05" y="0.0" width="2.1" height="4.1" rx="0.6" transform="rotate(150.0 21.1 4.1)" fill="#4b4f57"/><rect x="20.05" y="0.0" width="2.1" height="4.1" rx="0.6" transform="rotate(210.0 21.1 4.1)" fill="#4b4f57"/><rect x="20.05" y="0.0" width="2.1" height="4.1" rx="0.6" transform="rotate(270.0 21.1 4.1)" fill="#4b4f57"/><rect x="20.05" y="0.0" width="2.1" height="4.1" rx="0.6" transform="rotate(330.0 21.1 4.1)" fill="#4b4f57"/><circle cx="21.1" cy="4.1" r="3.1" fill="#4b4f57"/><circle cx="21.1" cy="4.1" r="1.5" fill="#fff"/><rect x="20.05" y="11.6" width="2.1" height="4.1" rx="0.6" transform="rotate(30.0 21.1 15.7)" fill="#4b4f57"/><rect x="20.05" y="11.6" width="2.1" height="4.1" rx="0.6" transform="rotate(90.0 21.1 15.7)" fill="#4b4f57"/><rect x="20.05" y="11.6" width="2.1" height="4.1" rx="0.6" transform="rotate(150.0 21.1 15.7)" fill="#4b4f57"/><rect x="20.05" y="11.6" width="2.1" height="4.1" rx="0.6" transform="rotate(210.0 21.1 15.7)" fill="#4b4f57"/><rect x="20.05" y="11.6" width="2.1" height="4.1" rx="0.6" transform="rotate(270.0 21.1 15.7)" fill="#4b4f57"/><rect x="20.05" y="11.6" width="2.1" height="4.1" rx="0.6" transform="rotate(330.0 21.1 15.7)" fill="#4b4f57"/><circle cx="21.1" cy="15.7" r="3.1" fill="#4b4f57"/><circle cx="21.1" cy="15.7" r="1.5" fill="#fff"/></svg>
<svg class="a" style="left:1328.8px;top:533.0999999999999px;width:23.5px;height:21.0px;" viewBox="0 0 23.5 21" preserveAspectRatio="none"><path d="M12.7,3.9 H3.9 A2.5,2.5 0 0 0 1.4,6.4 V16.8 A2.5,2.5 0 0 0 3.9,19.3 H14 A2.5,2.5 0 0 0 16.5,16.8 V13.1" stroke="#ffbb1c" stroke-width="2" fill="none" stroke-linecap="round"/><path d="M7.2,15.9 L7.83,11.59 L18.82,0.9 L22.3,4.38 L11.5,15.27 Z" stroke="#ffbb1c" stroke-width="1.8" fill="none" stroke-linejoin="round"/><line x1="16.66" y1="2.76" x2="20.14" y2="6.24" stroke="#ffbb1c" stroke-width="1.5"/></svg>
<div class="a" style="left:1420.3px;top:537.1999999999999px;width:17.40000000000009px;height:17.5px;border:1px solid #c6cbd1;border-radius:4px;background:#fff;box-sizing:border-box"></div>
<svg class="a" style="left:1473.5500000000002px;top:535.05px;width:21.699999999999818px;height:21.700000000000045px;" viewBox="0 0 21.7 21.7" preserveAspectRatio="none"><circle cx="10.85" cy="10.85" r="10.85" fill="#0b65fd"/><path d="M4.8,10.85 H15.5 M11.2,6 L16.2,10.85 L11.2,15.7" stroke="#fff" stroke-width="2.5" fill="none" stroke-linecap="round" stroke-linejoin="round"/></svg>
<div class="a" style="left:284px;top:614.2px;width:14.6px;height:14.6px;border-radius:50%;background:#1fcc8f"></div>
<div class="t" style="left:326.20px;top:612px;font-size:17.0px;line-height:17.0px;color:#333;-webkit-text-stroke:0.22px #333;transform:scaleX(0.9381);">10825</div>
<div class="t" style="left:405.79px;top:612px;font-size:17.5px;line-height:17.5px;color:#4f535c;font-weight:bold;transform:scaleX(0.9733);filter:blur(0.3px);opacity:0.9;">KVM</div>
<svg class="a" style="left:396.5px;top:614.0px;width:12.5px;height:15.0px;" viewBox="0 0 12.5 15" preserveAspectRatio="none"><circle cx="4" cy="1.8" r="1.4" fill="#3aa6e8"/><circle cx="10.5" cy="5.4" r="1.4" fill="#5cb531"/><circle cx="2.4" cy="9.8" r="1.3" fill="#e0399a"/>
<circle cx="6" cy="7.5" r="1.7" fill="#222"/><circle cx="6" cy="9.7" r="1.4" fill="#e5b93a"/><path d="M1,12.5 L4,12.6 M6.5,10.5 L8.8,13.8 L11.5,8.5" stroke="#222" stroke-width="1.7" fill="none" stroke-linecap="round"/></svg>
<svg class="a" style="left:469.7px;top:599.4px;width:43.599999999999966px;height:43.89999999999998px;" viewBox="0 0 43.6 43.9" preserveAspectRatio="none"><circle cx="21.8" cy="21.8" r="21.8" fill="#dd4814"/>
<circle cx="21.7" cy="21.6" r="10.25" stroke="#fff" stroke-width="4.3" fill="none"/>
<g stroke="#dd4814" stroke-width="1.5"><line x1="21.7" y1="21.6" x2="36" y2="21.6"/><line x1="21.7" y1="21.6" x2="14.5" y2="9.2"/><line x1="21.7" y1="21.6" x2="14.5" y2="34"/></g>
<g fill="#fff" stroke="#dd4814" stroke-width="1.3"><circle cx="6.7" cy="22.4" r="3.4"/><circle cx="29.3" cy="8.6" r="3.4"/><circle cx="29.3" cy="34.7" r="3.4"/></g></svg>
<div class="t" style="left:540.33px;top:602px;font-size:15.4px;line-height:15.4px;color:#3d4047;-webkit-text-stroke:0.22px #3d4047;transform:scaleX(1.1867);">testOpenVz</div>
<div class="t" style="left:539.46px;top:625px;font-size:15.6px;line-height:15.6px;color:#6b6f76;transform:scaleX(0.8891);">192.168.3.2</div>
<div class="a" style="left:749.6px;top:614px;width:247.39999999999998px;height:18px;background:#d9d9d9"></div>
<div class="a" style="left:1084px;top:598.2px;width:141.79999999999995px;height:23.299999999999955px;background:#d9d9d9"></div>
<div class="t" style="left:1086.47px;top:626px;font-size:15.4px;line-height:15.4px;color:#6b6f76;transform:scaleX(1.1246);">kvm2</div>
<svg class="a" style="left:1296.2px;top:608.9px;width:25.799999999999955px;height:20.0px;" viewBox="0 0 25.8 20" preserveAspectRatio="none"><rect x="6.3999999999999995" y="1.5999999999999996" width="4.4" height="8.4" rx="0.6" transform="rotate(0.0 8.6 10)" fill="#4b4f57"/><rect x="6.3999999999999995" y="1.5999999999999996" width="4.4" height="8.4" rx="0.6" transform="rotate(60.0 8.6 10)" fill="#4b4f57"/><rect x="6.3999999999999995" y="1.5999999999999996" width="4.4" height="8.4" rx="0.6" transform="rotate(120.0 8.6 10)" fill="#4b4f57"/><rect x="6.3999999999999995" y="1.5999999999999996" width="4.4" height="8.4" rx="0.6" transform="rotate(180.0 8.6 10)" fill="#4b4f57"/><rect x="6.3999999999999995" y="1.5999999999999996" width="4.4" height="8.4" rx="0.6" transform="rotate(240.0 8.6 10)" fill="#4b4f57"/><rect x="6.3999999999999995" y="1.5999999999999996" width="4.4" height="8.4" rx="0.6" transform="rotate(300.0 8.6 10)" fill="#4b4f57"/><circle cx="8.6" cy="10" r="6.9" fill="#4b4f57"/><circle cx="8.6" cy="10" r="3.0" fill="#fff"/><rect x="20.05" y="0.0" width="2.1" height="4.1" rx="0.6" transform="rotate(30.0 21.1 4.1)" fill="#4b4f57"/><rect x="20.05" y="0.0" width="2.1" height="4.1" rx="0.6" transform="rotate(90.0 21.1 4.1)" fill="#4b4f57"/><rect x="20.05" y="0.0" width="2.1" height="4.1" rx="0.6" transform="rotate(150.0 21.1 4.1)" fill="#4b4f57"/><rect x="20.05" y="0.0" width="2.1" height="4.1" rx="0.6" transform="rotate(210.0 21.1 4.1)" fill="#4b4f57"/><rect x="20.05" y="0.0" width="2.1" height="4.1" rx="0.6" transform="rotate(270.0 21.1 4.1)" fill="#4b4f57"/><rect x="20.05" y="0.0" width="2.1" height="4.1" rx="0.6" transform="rotate(330.0 21.1 4.1)" fill="#4b4f57"/><circle cx="21.1" cy="4.1" r="3.1" fill="#4b4f57"/><circle cx="21.1" cy="4.1" r="1.5" fill="#fff"/><rect x="20.05" y="11.6" width="2.1" height="4.1" rx="0.6" transform="rotate(30.0 21.1 15.7)" fill="#4b4f57"/><rect x="20.05" y="11.6" width="2.1" height="4.1" rx="0.6" transform="rotate(90.0 21.1 15.7)" fill="#4b4f57"/><rect x="20.05" y="11.6" width="2.1" height="4.1" rx="0.6" transform="rotate(150.0 21.1 15.7)" fill="#4b4f57"/><rect x="20.05" y="11.6" width="2.1" height="4.1" rx="0.6" transform="rotate(210.0 21.1 15.7)" fill="#4b4f57"/><rect x="20.05" y="11.6" width="2.1" height="4.1" rx="0.6" transform="rotate(270.0 21.1 15.7)" fill="#4b4f57"/><rect x="20.05" y="11.6" width="2.1" height="4.1" rx="0.6" transform="rotate(330.0 21.1 15.7)" fill="#4b4f57"/><circle cx="21.1" cy="15.7" r="3.1" fill="#4b4f57"/><circle cx="21.1" cy="15.7" r="1.5" fill="#fff"/></svg>
<svg class="a" style="left:1328.8px;top:608.3px;width:23.5px;height:21.0px;" viewBox="0 0 23.5 21" preserveAspectRatio="none"><path d="M12.7,3.9 H3.9 A2.5,2.5 0 0 0 1.4,6.4 V16.8 A2.5,2.5 0 0 0 3.9,19.3 H14 A2.5,2.5 0 0 0 16.5,16.8 V13.1" stroke="#ffbb1c" stroke-width="2" fill="none" stroke-linecap="round"/><path d="M7.2,15.9 L7.83,11.59 L18.82,0.9 L22.3,4.38 L11.5,15.27 Z" stroke="#ffbb1c" stroke-width="1.8" fill="none" stroke-linejoin="round"/><line x1="16.66" y1="2.76" x2="20.14" y2="6.24" stroke="#ffbb1c" stroke-width="1.5"/></svg>
<div class="a" style="left:1420.3px;top:612.4px;width:17.40000000000009px;height:17.5px;border:1px solid #c6cbd1;border-radius:4px;background:#fff;box-sizing:border-box"></div>
<svg class="a" style="left:1473.5500000000002px;top:610.25px;width:21.699999999999818px;height:21.700000000000045px;" viewBox="0 0 21.7 21.7" preserveAspectRatio="none"><circle cx="10.85" cy="10.85" r="10.85" fill="#0b65fd"/><path d="M4.8,10.85 H15.5 M11.2,6 L16.2,10.85 L11.2,15.7" stroke="#fff" stroke-width="2.5" fill="none" stroke-linecap="round" stroke-linejoin="round"/></svg>
<div class="a" style="left:1137.8px;top:750.4px;width:304.20000000000005px;height:50.89999999999998px;border:1px solid #dee2e6;border-radius:4px 0 0 4px;background:#fff;box-sizing:border-box"></div>
<div class="t" style="left:1152.01px;top:767px;font-size:16.1px;line-height:16.1px;color:#4a4f57;-webkit-text-stroke:0.22px #4a4f57;transform:scaleX(1.0760);">With Selected:</div>
<svg class="a" style="left:1418.5px;top:770.7px;width:8.5px;height:10.799999999999955px;" viewBox="0 0 8.5 10.8" preserveAspectRatio="none"><path d="M0,4.4 H8.5 L4.25,0 Z M0,6.4 H8.5 L4.25,10.8 Z" fill="#3b3f46"/></svg>
<div class="a" style="left:1441.5px;top:750.3px;width:68.09999999999991px;height:51.10000000000002px;background:#0866ff;border-radius:0 4px 4px 0"></div>
<div class="t" style="left:1461.84px;top:769px;font-size:17.2px;line-height:17.2px;color:#fff;-webkit-text-stroke:0.22px #fff;transform:scaleX(1.1114);-webkit-text-stroke:0.5px #fff;">Go</div>
</body></html>
